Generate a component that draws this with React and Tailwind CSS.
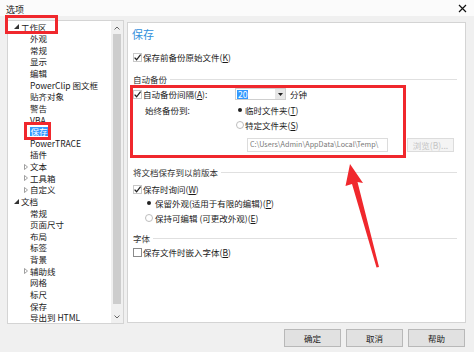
import React from "react";

const tree = [
  { t: "工作区", lvl: 0, exp: "open" },
  { t: "外观", lvl: 1 },
  { t: "常规", lvl: 1 },
  { t: "显示", lvl: 1 },
  { t: "编辑", lvl: 1 },
  { t: "PowerClip 图文框", lvl: 1 },
  { t: "贴齐对象", lvl: 1 },
  { t: "警告", lvl: 1 },
  { t: "VBA", lvl: 1 },
  { t: "保存", lvl: 1, sel: true },
  { t: "PowerTRACE", lvl: 1 },
  { t: "插件", lvl: 1 },
  { t: "文本", lvl: 1, exp: "closed" },
  { t: "工具箱", lvl: 1, exp: "closed" },
  { t: "自定义", lvl: 1, exp: "closed" },
  { t: "文档", lvl: 0, exp: "open" },
  { t: "常规", lvl: 1 },
  { t: "页面尺寸", lvl: 1 },
  { t: "布局", lvl: 1 },
  { t: "标签", lvl: 1 },
  { t: "背景", lvl: 1 },
  { t: "辅助线", lvl: 1, exp: "closed" },
  { t: "网格", lvl: 1 },
  { t: "标尺", lvl: 1 },
  { t: "保存", lvl: 1 },
  { t: "导出到 HTML", lvl: 1 },
];

function Expander({ exp }) {
  if (exp === "open")
    return (
      <svg width="5" height="5" viewBox="0 0 5 5" className="shrink-0">
        <polygon points="5,0 5,5 0,5" fill="#333" />
      </svg>
    );
  return (
    <svg width="4" height="6" viewBox="0 0 4 6" className="shrink-0">
      <polygon points="0.5,0.5 3.5,3 0.5,5.5" fill="none" stroke="#888" strokeWidth="0.8" />
    </svg>
  );
}

function TreeRow({ item }) {
  if (item.lvl === 0) {
    return (
      <div className="h-[11.64px] flex items-center pl-[6px] gap-[2px]">
        <Expander exp="open" />
        <span>{item.t}</span>
      </div>
    );
  }
  return (
    <div className="h-[11.64px] flex items-center relative pl-[22px]">
      {item.exp && (
        <span className="absolute left-[16px] top-[3px]">
          <Expander exp={item.exp} />
        </span>
      )}
      <span className={item.sel ? "bg-[#3399ff] text-white px-[0.5px] leading-[9px]" : ""}>{item.t}</span>
    </div>
  );
}

function Check({ checked }) {
  return (
    <svg width="9" height="9" viewBox="0 0 9 9" className="shrink-0">
      <rect x="0.5" y="0.5" width="8" height="8" fill="#fff" stroke={checked ? "#c8c8c8" : "#8a8a8a"} />
      {checked && <path d="M1.6 4.6 L3.6 6.8 L7.6 1.6" fill="none" stroke="#222" strokeWidth="1.3" />}
    </svg>
  );
}

function Radio({ on }) {
  return (
    <svg width="8" height="8" viewBox="0 0 8 8" className="shrink-0">
      <circle cx="4" cy="4" r="3.5" fill="#fff" stroke={on ? "#fff" : "#bdbdbd"} />
      {on && <circle cx="4" cy="4" r="2" fill="#222" />}
    </svg>
  );
}

function GroupLabel({ children }) {
  return (
    <div className="h-[12px] flex items-center pl-[5px] pr-[8px]">
      <span className="text-[#333]">{children}</span>
      <div className="flex-1 h-px bg-[#e0e0e0] ml-[3px]" />
    </div>
  );
}

function M({ k }) {
  return (
    <>
      (<span className="underline">{k}</span>)
    </>
  );
}

export default function App() {
  return (
    <div className="w-[474px] h-[356px] bg-[#f0f0f0] relative overflow-hidden text-[8.5px] leading-none text-[#1a1a1a] font-['Noto_Sans_CJK_SC','Noto_Sans',sans-serif]">
      {/* title bar */}
      <div className="h-[16px] bg-[#fbfbfb] flex items-center justify-between pl-[6px] pr-[7px]">
        <span className="text-[9px] mt-[2px]">选项</span>
        <svg width="9" height="9" viewBox="0 0 9 9" className="mt-[1px]">
          <path d="M1 1 L8 8 M8 1 L1 8" stroke="#111" strokeWidth="1.2" />
        </svg>
      </div>

      {/* body */}
      <div className="flex items-start pl-[7px] pt-[4px] gap-[3px]">
        {/* tree */}
        <div className="w-[117px] h-[304px] bg-white border border-[#d4d4d4] flex overflow-hidden">
          <div className="flex-1">
            {tree.map((it, i) => (
              <TreeRow key={i} item={it} />
            ))}
          </div>
          <div className="w-[12px] bg-[#f0f0f0] flex flex-col items-stretch">
            <div className="h-[13px] flex items-center justify-center">
              <svg width="6" height="4" viewBox="0 0 6 4">
                <path d="M0.5 3.5 L3 1 L5.5 3.5" fill="none" stroke="#555" strokeWidth="0.9" />
              </svg>
            </div>
            <div className="h-[270px] mx-[2px] bg-[#cdcdcd]" />
            <div className="flex-1" />
            <div className="h-[12px] flex items-center justify-center">
              <svg width="6" height="4" viewBox="0 0 6 4">
                <path d="M0.5 0.5 L3 3 L5.5 0.5" fill="none" stroke="#555" strokeWidth="0.9" />
              </svg>
            </div>
          </div>
        </div>

        {/* right panel */}
        <div className="mt-[2px] w-[339px] h-[301px] bg-white border border-[#d4d4d4] flex flex-col pt-[3px]">
          <div className="h-[16px] flex items-center pl-[4px] text-[11px] text-[#3390dc]">保存</div>

          <div className="mt-[9px] h-[12px] flex items-center pl-[5px] gap-[1px]">
            <Check checked />
            <span>保存前备份原始文件<M k="K" /></span>
          </div>

          <div className="mt-[10px]">
            <GroupLabel>自动备份</GroupLabel>
          </div>

          <div className="mt-[3px] h-[12px] flex items-center pl-[5px]">
            <div className="w-[102px] flex items-center gap-[1px]">
              <Check checked />
              <span>自动备份间隔<M k="A" />:</span>
            </div>
            <div className="w-[51px] h-[12px] border border-[#cfcfcf] flex items-center bg-white">
              <span className="bg-[#3399ff] text-white px-[1px] ml-[1px] leading-[9px]">20</span>
              <div className="flex-1" />
              <div className="w-[10px] h-full bg-[#e6e6e6] flex items-center justify-center">
                <svg width="5" height="3" viewBox="0 0 5 3">
                  <polygon points="0,0 5,0 2.5,3" fill="#222" />
                </svg>
              </div>
            </div>
            <span className="ml-[4px]">分钟</span>
          </div>

          <div className="mt-[4px] flex">
            <div className="w-[108px] pl-[17px] h-[12px] flex items-center">始终备份到:</div>
            <div className="flex flex-col">
              <div className="h-[12px] flex items-center gap-[1px]">
                <Radio on />
                <span>临时文件夹<M k="T" /></span>
              </div>
              <div className="mt-[3px] h-[12px] flex items-center gap-[1px]">
                <Radio />
                <span>特定文件夹<M k="S" /></span>
              </div>
            </div>
          </div>

          <div className="mt-[7px] h-[14px] flex pl-[119px]">
            <div className="w-[141px] h-full border border-[#dcdcdc] bg-white flex items-center pl-[2px] text-[7.2px] text-[#777] overflow-hidden whitespace-nowrap">
              C:\Users\Admin\AppData\Local\Temp\
            </div>
            <div className="ml-[19px] w-[47px] h-full border border-[#dcdcdc] bg-[#f4f4f4] flex items-center justify-center text-[#c4c4c4]">
              浏览(B)...
            </div>
          </div>

          <div className="mt-[14px]">
            <GroupLabel>将文档保存到以前版本</GroupLabel>
          </div>

          <div className="mt-[5px] h-[12px] flex items-center pl-[5px] gap-[1px]">
            <Check checked />
            <span>保存时询问<M k="W" /></span>
          </div>

          <div className="mt-[2px] h-[12px] flex items-center pl-[17px] gap-[2px]">
            <Radio on />
            <span>保留外观(适用于有限的编辑)<M k="P" /></span>
          </div>

          <div className="mt-[3px] h-[12px] flex items-center pl-[17px] gap-[2px]">
            <Radio />
            <span>保持可编辑 (可更改外观)<M k="E" /></span>
          </div>

          <div className="mt-[8px]">
            <GroupLabel>字体</GroupLabel>
          </div>

          <div className="mt-[2px] h-[12px] flex items-center pl-[5px] gap-[1px]">
            <Check />
            <span>保存文件时嵌入字体<M k="B" /></span>
          </div>
        </div>
      </div>

      {/* buttons */}
      <div className="flex justify-end pr-[9px] mt-[5px] gap-[5px]">
        {["确定", "取消", "帮助"].map((b) => (
          <div key={b} className="w-[57px] h-[18px] bg-[#e1e1e1] border border-[#b8b8b8] flex items-center justify-center">
            {b}
          </div>
        ))}
      </div>
      <div className="absolute left-0 right-0 bottom-0 h-[4px] bg-white" />

      {/* red annotations */}
      <div className="absolute left-[5px] top-[15px] w-[53px] h-[19px] border-[3px] border-[#f0282d]" />
      <div className="absolute left-[24px] top-[122px] w-[27px] h-[18px] border-[3px] border-[#f0282d]" />
      <div className="absolute left-[130px] top-[85px] w-[276px] h-[73px] border-[3px] border-[#f0282d]" />
      <svg className="absolute left-0 top-0" width="474" height="356" viewBox="0 0 474 356">
        <polygon points="350,164 363,183 357.5,182 379,267 376.5,267.5 352,184 345.5,186" fill="#f0282d" />
      </svg>
    </div>
  );
}
